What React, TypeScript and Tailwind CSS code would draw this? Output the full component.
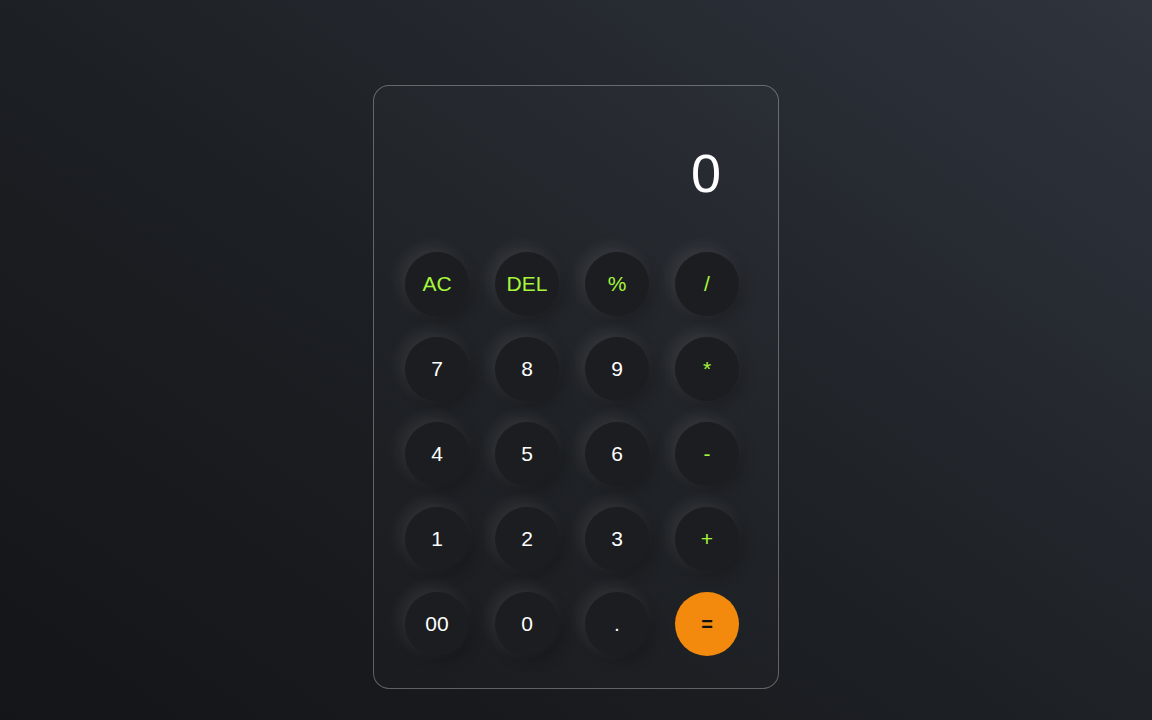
import React from 'react';

const keys = [
  { label: "AC", kind: "op" },
  { label: "DEL", kind: "op" },
  { label: "%", kind: "op" },
  { label: "/", kind: "op" },
  { label: "7", kind: "num" },
  { label: "8", kind: "num" },
  { label: "9", kind: "num" },
  { label: "*", kind: "op" },
  { label: "4", kind: "num" },
  { label: "5", kind: "num" },
  { label: "6", kind: "num" },
  { label: "-", kind: "op" },
  { label: "1", kind: "num" },
  { label: "2", kind: "num" },
  { label: "3", kind: "num" },
  { label: "+", kind: "op" },
  { label: "00", kind: "num" },
  { label: "0", kind: "num" },
  { label: ".", kind: "num" },
  { label: "=", kind: "eq" },
];

const Key = ({ label, kind }: { label: string; kind: string }) => {
  if (kind === "eq") {
    return (
      <button className="w-16 h-16 rounded-full bg-[#f3890d] text-[#111] text-xl font-bold flex items-center justify-center">
        {label}
      </button>
    );
  }
  return (
    <button
      className={
        "w-16 h-16 rounded-full bg-[#1b1d21] text-[21px] flex items-center justify-center shadow-[-5px_-5px_16px_rgba(255,255,255,0.09),5px_5px_14px_rgba(0,0,0,0.2)] " +
        (kind === "op" ? "text-[#a6f53c]" : "text-white")
      }
    >
      {label}
    </button>
  );
};

const App = () => {
  return (
    <div className="min-h-screen w-full bg-[linear-gradient(35deg,#131518_0%,#1c1f23_45%,#2f343d_100%)] pt-[85px] font-['Liberation_Sans',Arial,sans-serif]">
      <div className="mx-auto w-[406px] h-[604px] rounded-2xl border border-white/30 bg-white/[0.015] flex flex-col">
        <div className="h-[166px] flex items-center justify-end pr-[57px] pt-[8px]">
          <span className="text-[54px] leading-none text-white">0</span>
        </div>
        <div className="grid grid-cols-[repeat(4,64px)] gap-x-[26px] gap-y-[21px] pl-[31px]">
          {keys.map((k) => (
            <Key key={k.label} label={k.label} kind={k.kind} />
          ))}
        </div>
      </div>
    </div>
  );
};

export default App;
